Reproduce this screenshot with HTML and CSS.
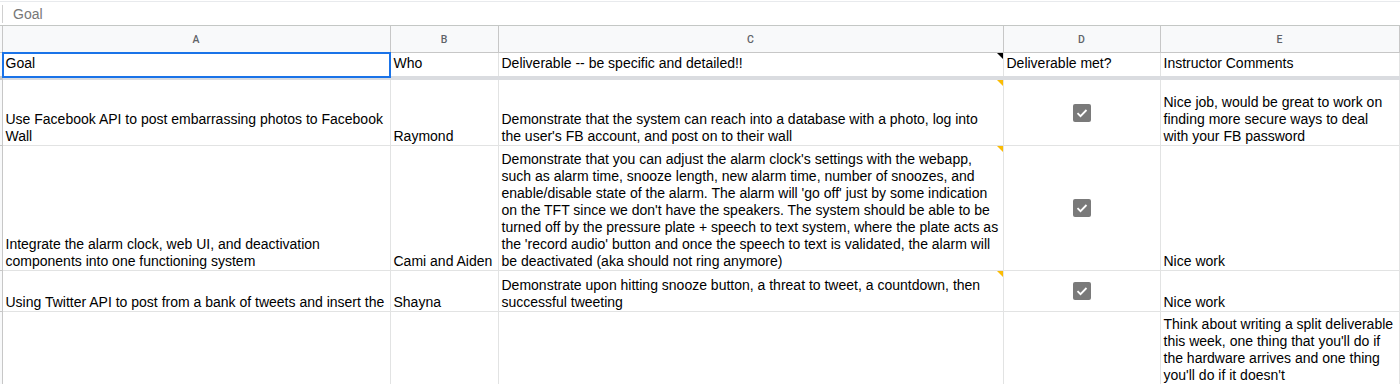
FILE: index.html
```html
<!DOCTYPE html>
<html lang="en">
<head>
  <meta charset="UTF-8">
  <title>Goal sheet</title>
  <link rel="stylesheet" href="styles.css">
</head>
<body>
  <!-- formula bar -->
  <div class="formula-bar">
    <span class="fx-sep"></span>
    <span class="fx-text">Goal</span>
  </div>

  <table class="grid">
    <colgroup>
      <col class="c-stub">
      <col class="c-a">
      <col class="c-b">
      <col class="c-c">
      <col class="c-d">
      <col class="c-e">
    </colgroup>
    <thead>
      <tr class="col-heads">
        <th class="stub"></th>
        <th>A</th>
        <th>B</th>
        <th>C</th>
        <th>D</th>
        <th>E</th>
      </tr>
    </thead>
    <tbody>
      <tr class="r1 frozen">
        <td class="stub"></td>
        <td class="selected">Goal</td>
        <td>Who</td>
        <td class="note">Deliverable -- be specific and detailed!!</td>
        <td>Deliverable met?</td>
        <td>Instructor Comments</td>
      </tr>
      <tr class="r2">
        <td class="stub"></td>
        <td>Use Facebook API to post embarrassing photos to Facebook Wall</td>
        <td>Raymond</td>
        <td class="comment">Demonstrate that the system can reach into a database with a photo, log into the user's FB account, and post on to their wall</td>
        <td class="check"><span class="box"><svg viewBox="0 0 18 18" width="18" height="18"><path d="M4.5 9.2l3 3 6-6.2" fill="none" stroke="#fff" stroke-width="1.8"/></svg></span></td>
        <td>Nice job, would be great to work on finding more secure ways to deal with your FB password</td>
      </tr>
      <tr class="r3">
        <td class="stub"></td>
        <td>Integrate the alarm clock, web UI, and deactivation components into one functioning system</td>
        <td>Cami and Aiden</td>
        <td class="comment">Demonstrate that you can adjust the alarm clock's settings with the webapp, such as alarm time, snooze length, new alarm time, number of snoozes, and enable/disable state of the alarm. The alarm will 'go off' just by some indication on the TFT since we don't have the speakers. The system should be able to be turned off by the pressure plate + speech to text system, where the plate acts as the 'record audio' button and once the speech to text is validated, the alarm will be deactivated (aka should not ring anymore)</td>
        <td class="check"><span class="box"><svg viewBox="0 0 18 18" width="18" height="18"><path d="M4.5 9.2l3 3 6-6.2" fill="none" stroke="#fff" stroke-width="1.8"/></svg></span></td>
        <td>Nice work</td>
      </tr>
      <tr class="r4">
        <td class="stub"></td>
        <td class="clip">Using Twitter API to post from a bank of tweets and insert the</td>
        <td>Shayna</td>
        <td class="comment">Demonstrate upon hitting snooze button, a threat to tweet, a countdown, then successful tweeting</td>
        <td class="check"><span class="box"><svg viewBox="0 0 18 18" width="18" height="18"><path d="M4.5 9.2l3 3 6-6.2" fill="none" stroke="#fff" stroke-width="1.8"/></svg></span></td>
        <td>Nice work</td>
      </tr>
      <tr class="r5">
        <td class="stub"></td>
        <td></td>
        <td></td>
        <td></td>
        <td></td>
        <td>Think about writing a split deliverable this week, one thing that you'll do if the hardware arrives and one thing you'll do if it doesn't</td>
      </tr>
    </tbody>
  </table>
</body>
</html>
```

FILE: styles.css
```css
body {
  margin: 0;
  background: #fff;
  font-family: "Liberation Sans", Arial, sans-serif;
  color: #000;
  overflow: hidden;
}

/* formula bar */
.formula-bar {
  height: 23px;
  margin-top: 1px;
  border-top: 1px solid #e8eaed;
  border-bottom: 1px solid #c4c7c5;
  display: flex;
  align-items: center;
}
.fx-sep {
  width: 1px;
  height: 18px;
  margin-left: 2px;
  background: #d0d0d0;
}
.fx-text {
  margin-left: 10px;
  font-size: 14px;
  color: #777;
}

/* grid */
.grid {
  border-collapse: collapse;
  table-layout: fixed;
  width: 1399px;
  font-size: 14px;
  line-height: 17px;
}
.c-stub { width: 2px; }
.c-a { width: 388px; }
.c-b { width: 108px; }
.c-c { width: 505px; }
.c-d { width: 157px; }
.c-e { width: 239px; }

.grid td, .grid th {
  border: 1px solid #e2e3e3;
  padding: 0 3px 0 3px;
  vertical-align: bottom;
  overflow: hidden;
  white-space: normal;
  word-wrap: break-word;
}
.grid .stub {
  padding: 0;
  background: #f8f9fa;
  border-left: none;
  border-color: #c7c7c7;
}

.col-heads th {
  height: 26px;
  background: #f8f9fa;
  border-color: #c7c7c7;
  border-top: none;
  font-family: Roboto, "Liberation Sans", sans-serif;
  font-size: 10.5px;
  font-weight: 500;
  color: #5f6368;
  text-align: center;
  vertical-align: middle;
  padding: 0;
}

.r1 td { height: 19px; padding-bottom: 4px; }
.frozen td { border-bottom: 4px solid #dadce0; }
.r2 td { height: 65px; }
.r3 td { height: 124px; }
.r4 td { height: 40px; }
.r5 td { height: 72px; }

.clip { white-space: nowrap !important; }

/* active cell */
.grid td.selected {
  position: relative;
  overflow: visible;
}
.grid td.selected::after {
  content: "";
  position: absolute;
  left: -1px;
  top: -1px;
  right: -1px;
  bottom: -2px;
  border: 2px solid #1a73e8;
}

/* note / comment markers */
.note, .comment { position: relative; }
.note::before, .comment::before {
  content: "";
  position: absolute;
  top: 0;
  right: 0;
  border-style: solid;
  border-width: 0 6px 6px 0;
}
.note::before { border-color: transparent #000 transparent transparent; }
.comment::before { border-color: transparent #fbbc04 transparent transparent; }

/* checkbox */
.grid td.check {
  text-align: center;
  vertical-align: middle;
  padding: 0;
}
.box {
  display: inline-block;
  width: 18px;
  height: 18px;
  border-radius: 2px;
  background: #7a7a7a;
  vertical-align: middle;
}
.box svg { display: block; }
```
